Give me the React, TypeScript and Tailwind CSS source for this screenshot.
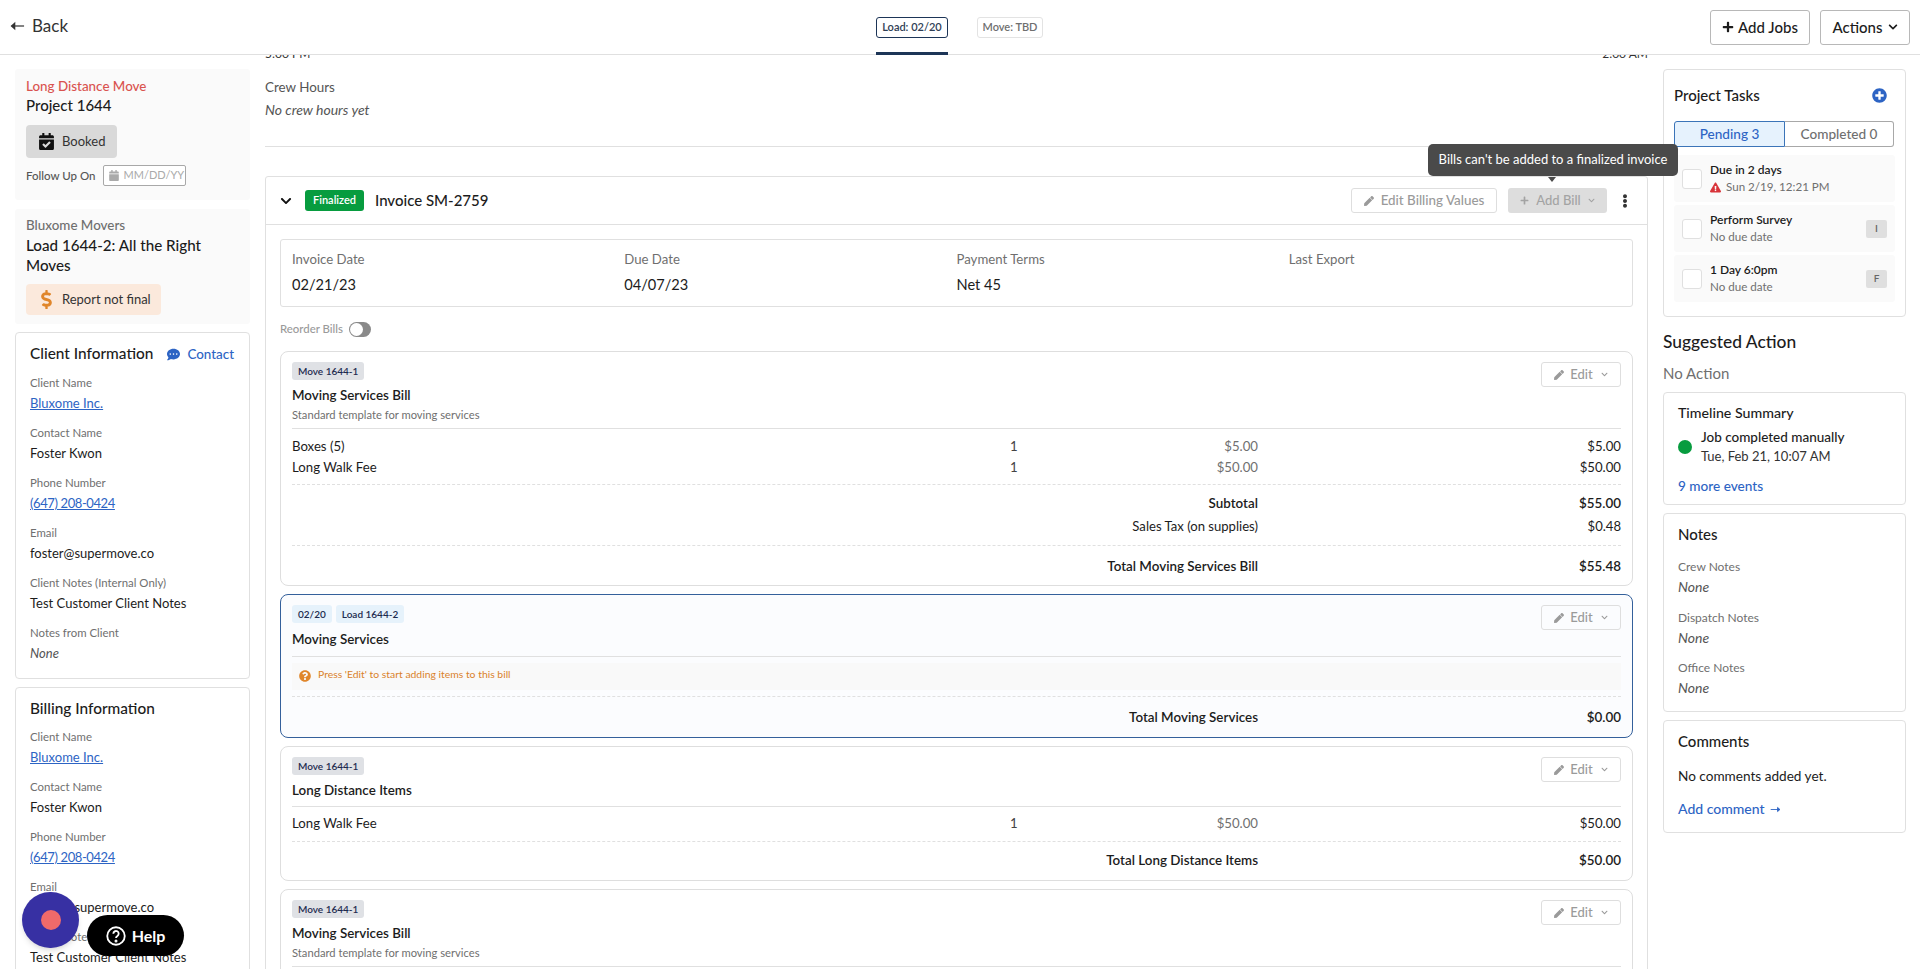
import React from "react";
import {
  FaCalendarCheck, FaCalendar, FaDollarSign, FaPen, FaChevronDown, FaCommentDots, FaPlus,
  FaEllipsisV, FaExclamationTriangle, FaQuestionCircle, FaPlusCircle,
} from "react-icons/fa";

const Arrow = ({ left, className }: { left?: boolean; className?: string }) => (
  <svg viewBox="0 0 16 10" className={className} fill="none" stroke="currentColor" strokeWidth="1.3">
    {left ? (
      <>
        <path d="M15 5H2" />
        <path d="M5 2 1.6 5 5 8z" fill="currentColor" />
      </>
    ) : (
      <>
        <path d="M1 5h13" />
        <path d="M11 2l3.4 3L11 8z" fill="currentColor" />
      </>
    )}
  </svg>
);

const Field = ({ label, value, kind }: { label: string; value: string; kind?: "link" | "phone" | "none" }) => (
  <div className="h-[50px]">
    <div className="h-[16px] text-[11.4px] leading-[16px] text-[#6f6f6f]">{label}</div>
    <div
      className={
        "mt-[2px] h-[20px] text-[13px] leading-[20px] " +
        (kind === "link"
          ? "text-[#2d64c4] underline"
          : kind === "phone"
            ? "text-[#2d64c4] underline tracking-[-0.4px]"
            : kind === "none"
              ? "italic text-[#555555]"
              : "text-[#1c1c1c]")
      }
    >
      {value}
    </div>
  </div>
);

const Chip = ({ children, blue }: { children: React.ReactNode; blue?: boolean }) => (
  <span
    className={
      "flex h-[18px] items-center rounded-[3px] px-[6px] text-[10px] font-semibold text-[#1d2b4f] " +
      (blue ? "bg-[#e6f2fb]" : "bg-[#dfe1e5]")
    }
  >
    {children}
  </span>
);

const EditButton = ({ light }: { light?: boolean }) => (
  <div
    className={
      "flex h-[25px] w-[80px] items-center justify-center gap-[6px] rounded-[3px] border border-[#dedede] text-[13px] font-medium text-[#9a9a9a] " +
      (light ? "bg-[#fbfcfe]" : "bg-white")
    }
  >
    <FaPen className="h-[10px] w-[10px]" />
    <span>Edit</span>
    <FaChevronDown className="ml-[2px] h-[7px] w-[7px]" />
  </div>
);

const Item = ({ name, price, total }: { name: string; price: string; total: string }) => (
  <div className="flex h-[21px] items-center text-[13.2px] text-[#1c1c1c]">
    <div className="w-[718px]">{name}</div>
    <div className="w-[20px] text-[#444444]">1</div>
    <div className="flex-1 text-right text-[#6f6f6f]">{price}</div>
    <div className="w-[363px] text-right">{total}</div>
  </div>
);

const Sum = ({ label, value, bold, className }: { label: string; value: string; bold?: boolean; className?: string }) => (
  <div
    className={
      "flex items-center text-[#1c1c1c] " +
      (bold ? "text-[13.4px] font-semibold " : "text-[13.1px] ") +
      (className ?? "")
    }
  >
    <div className="flex-1 text-right">{label}</div>
    <div className="w-[363px] text-right">{value}</div>
  </div>
);

const BillHead = ({
  chips,
  title,
  desc,
  blue,
  tight,
}: {
  chips: string[];
  title: string;
  desc?: string;
  blue?: boolean;
  tight?: boolean;
}) => (
  <div className={"flex items-start justify-between border-b border-[#e0e0e0] " + (desc ? "pb-[5px]" : tight ? "pb-[6px]" : "pb-[7px]")}>
    <div>
      <div className="flex gap-[4px]">
        {chips.map((c) => (
          <Chip key={c} blue={blue}>
            {c}
          </Chip>
        ))}
      </div>
      <div className={"text-[13.4px] font-semibold leading-[20px] text-[#1c1c1c] " + (desc || tight ? "mt-[5px]" : "mt-[6px]")}>
        {title}
      </div>
      {desc && <div className="mt-[2px] text-[11.2px] leading-[16px] text-[#6f6f6f]">{desc}</div>}
    </div>
    <EditButton light={blue} />
  </div>
);

const Dash = () => <div className="border-b border-dashed border-[#e0e0e0]" />;

const Bill = ({ children, blue }: { children: React.ReactNode; blue?: boolean }) => (
  <div
    className={
      "rounded-[8px] border px-[11px] pt-[10px] " +
      (blue ? "border-[#34609b] bg-[#fbfcfe]" : "border-[#dedede] bg-white")
    }
  >
    {children}
  </div>
);

const SideCard = ({ children, className }: { children: React.ReactNode; className?: string }) => (
  <div className={"shrink-0 rounded-[4px] border border-[#e0e0e0] bg-white " + (className ?? "")}>{children}</div>
);

const Task = ({
  title,
  sub,
  tag,
  warn,
}: {
  title: string;
  sub: string;
  tag?: string;
  warn?: boolean;
}) => (
  <div className="flex h-[47px] items-center rounded-[3px] bg-[#fafafa] pl-[8px] pr-[8px]">
    <div className="h-[20px] w-[20px] rounded-[3px] border border-[#e0e0e0] bg-white" />
    <div className="ml-[8px] flex-1">
      <div className="text-[12px] font-semibold leading-[16px] text-[#1c1c1c]">{title}</div>
      <div className="mt-[1px] flex items-center gap-[5px] text-[11.6px] leading-[16px] text-[#6f6f6f]">
        {warn && <FaExclamationTriangle className="h-[11px] w-[11px] text-[#d8343a]" />}
        <span>{sub}</span>
      </div>
    </div>
    {tag && (
      <div className="flex h-[18px] w-[21px] items-center justify-center rounded-[2px] bg-[#dfdfdf] text-[10px] font-semibold text-[#666666]">
        {tag}
      </div>
    )}
  </div>
);

export default function App() {
  return (
    <div className="relative flex h-[969px] w-[1920px] flex-col overflow-hidden bg-white font-['Lato','Noto_Sans',sans-serif] text-[#1c1c1c]">
      {/* Header */}
      <header className="relative flex h-[55px] shrink-0 items-center justify-between border-b border-[#e0e0e0] bg-white pl-[10px] pr-[10px]">
        <div className="-mt-[2px] flex items-center gap-[7px] text-[17px] text-[#333333]">
          <Arrow left className="h-[10px] w-[15px]" />
          <span>Back</span>
        </div>
        <div className="absolute bottom-[-1px] left-[876px] flex h-[38px] items-start gap-[29px]">
          <div className="flex h-[38px] w-[72px] flex-col">
            <div className="flex h-[21px] items-center justify-center rounded-[3px] border border-[#1d3557] text-[11px] font-semibold text-[#2f3e55]">
              Load: 02/20
            </div>
            <div className="mt-auto h-[3px] bg-[#1d3557]" />
          </div>
          <div className="flex h-[21px] w-[66px] items-center justify-center rounded-[3px] border border-[#e3e3e3] text-[11px] font-semibold text-[#6f6f6f]">
            Move: TBD
          </div>
        </div>
        <div className="flex gap-[10px]">
          <div className="flex h-[35px] w-[100px] items-center justify-center gap-[4px] rounded-[3px] border border-[#b8b8b8] text-[15px] font-medium">
            <FaPlus className="h-[12px] w-[12px]" />
            <span>Add Jobs</span>
          </div>
          <div className="flex h-[35px] w-[90px] items-center justify-center gap-[5px] rounded-[3px] border border-[#b8b8b8] text-[15px] font-medium">
            <span>Actions</span>
            <FaChevronDown className="h-[10px] w-[10px]" />
          </div>
        </div>
      </header>

      <div className="flex min-h-0 flex-1">
        {/* Left */}
        <aside className="flex w-[265px] shrink-0 flex-col overflow-hidden px-[15px] pt-[14px]">
          <div className="h-[131px] shrink-0 rounded-[3px] bg-[#fafafa] px-[11px] pt-[8px]">
            <div className="text-[13.4px] font-medium leading-[18px] text-[#d9534f]">Long Distance Move</div>
            <div className="text-[15px] font-medium leading-[20px]">Project 1644</div>
            <div className="mt-[10px] flex h-[33px] w-[91px] items-center rounded-[4px] bg-[#d9d9d9] pl-[13px]">
              <FaCalendarCheck className="h-[17px] w-[15px] text-[#111111]" />
              <span className="ml-[8px] text-[13px] text-[#333333]">Booked</span>
            </div>
            <div className="mt-[7px] flex items-center">
              <span className="text-[11.5px] font-medium text-[#555555]">Follow Up On</span>
              <div className="ml-[8px] flex h-[21px] w-[83px] items-center gap-[4px] rounded-[2px] border border-[#a8a8a8] bg-white pl-[5px] text-[11px] text-[#aaaaaa]">
                <FaCalendar className="h-[11px] w-[10px]" />
                <span>MM/DD/YY</span>
              </div>
            </div>
          </div>
          <div className="mt-[9px] h-[115px] shrink-0 rounded-[3px] bg-[#fafafa] px-[11px] pt-[8px]">
            <div className="text-[13.4px] font-medium leading-[16px] text-[#6f6f6f]">Bluxome Movers</div>
            <div className="mt-[2px] text-[15.2px] font-medium leading-[20px]">Load 1644-2: All the Right Moves</div>
            <div className="mt-[9px] flex h-[31px] w-[135px] items-center rounded-[4px] bg-[#fbe9dc] pl-[13px]">
              <FaDollarSign className="h-[19px] w-[15px] text-[#e0862b]" />
              <span className="ml-[8px] text-[13px] text-[#333333]">Report not final</span>
            </div>
          </div>
          <SideCard className="mt-[8px] h-[347px] px-[14px] pt-[11px]">
            <div className="mb-[11px] flex h-[20px] items-center justify-between pr-[1px]">
              <span className="text-[15.4px] font-medium">Client Information</span>
              <span className="flex items-center gap-[7px] text-[13.4px] font-medium text-[#2d64c4]">
                <FaCommentDots className="h-[13px] w-[13px]" />
                Contact
              </span>
            </div>
            <Field label="Client Name" value="Bluxome Inc." kind="link" />
            <Field label="Contact Name" value="Foster Kwon" />
            <Field label="Phone Number" value="(647) 208-0424" kind="phone" />
            <Field label="Email" value="foster@supermove.co" />
            <Field label="Client Notes (Internal Only)" value="Test Customer Client Notes" />
            <Field label="Notes from Client" value="None" kind="none" />
          </SideCard>
          <SideCard className="mt-[8px] h-[400px] px-[14px] pt-[11px]">
            <div className="mb-[10px] flex h-[20px] items-center text-[15.4px] font-medium">Billing Information</div>
            <Field label="Client Name" value="Bluxome Inc." kind="link" />
            <Field label="Contact Name" value="Foster Kwon" />
            <Field label="Phone Number" value="(647) 208-0424" kind="phone" />
            <Field label="Email" value="foster@supermove.co" />
            <Field label="Client Notes (Internal Only)" value="Test Customer Client Notes" />
          </SideCard>
        </aside>

        {/* Center */}
        <main className="flex w-[1383px] shrink-0 flex-col">
          <div className="flex h-[3px] shrink-0 items-end justify-between overflow-hidden text-[12px] leading-[9px] text-[#333333]">
            <span>5:00 PM</span>
            <span>2:00 AM</span>
          </div>
          <div className="mt-[19px] shrink-0 text-[13.4px] leading-[20px] text-[#555555]">Crew Hours</div>
          <div className="mt-[3px] shrink-0 text-[14px] italic leading-[20px] text-[#555555]">No crew hours yet</div>
          <div className="mt-[26px] shrink-0 border-b border-[#e0e0e0]" />
          <section className="mt-[29px] shrink-0 rounded-t-[3px] border border-[#e0e0e0]">
            <div className="flex h-[48px] items-center border-b border-[#e0e0e0] pl-[14px] pr-[18px]">
              <FaChevronDown className="h-[12px] w-[12px] text-[#111111]" />
              <span className="ml-[13px] flex h-[21px] w-[59px] items-center justify-center rounded-[3px] bg-[#079c3f] text-[11px] font-semibold text-white">
                Finalized
              </span>
              <span className="ml-[11px] text-[15px] font-medium">Invoice SM-2759</span>
              <div className="ml-auto flex items-center">
                <div className="flex h-[25px] w-[146px] items-center justify-center gap-[7px] rounded-[3px] border border-[#dedede] text-[13.4px] font-medium text-[#9a9a9a]">
                  <FaPen className="h-[10px] w-[10px]" />
                  Edit Billing Values
                </div>
                <div className="relative ml-[11px] flex h-[25px] w-[99px] items-center justify-center gap-[7px] rounded-[3px] bg-[#dddddd] text-[13px] font-medium text-[#a3a3a3]">
                  <FaPlus className="h-[9px] w-[9px]" />
                  Add Bill
                  <FaChevronDown className="h-[7px] w-[7px]" />
                  <div className="absolute bottom-[37px] right-[-71px] z-10 flex h-[32px] w-[250px] items-center justify-center rounded-[5px] bg-[#4a4a4a] text-[13px] font-normal text-white">
                    Bills can't be added to a finalized invoice
                  </div>
                  <div className="absolute left-[40px] top-[-11px] z-10 h-0 w-0 border-x-[4px] border-t-[5px] border-x-transparent border-t-[#4a4a4a]" />
                </div>
                <FaEllipsisV className="ml-[14px] h-[14px] w-[8px] text-[#333333]" />
              </div>
            </div>
            <div className="px-[14px] pt-[14px]">
              <div className="grid h-[68px] grid-cols-4 rounded-[3px] border border-[#e0e0e0] px-[11px] pt-[9px]">
                {[
                  ["Invoice Date", "02/21/23"],
                  ["Due Date", "04/07/23"],
                  ["Payment Terms", "Net 45"],
                  ["Last Export", ""],
                ].map(([l, v]) => (
                  <div key={l}>
                    <div className="text-[13.2px] leading-[20px] text-[#6f6f6f]">{l}</div>
                    <div className="mt-[6px] text-[14.6px] leading-[20px]">{v}</div>
                  </div>
                ))}
              </div>
              <div className="mt-[14px] flex h-[16px] items-center">
                <span className="text-[11.4px] font-medium text-[#9a9a9a]">Reorder Bills</span>
                <div className="ml-[6px] flex h-[15px] w-[22px] items-center rounded-full bg-[#8a8a8a] pl-[1px]">
                  <div className="h-[13px] w-[13px] rounded-full bg-white" />
                </div>
              </div>
              <div className="mt-[14px] flex flex-col gap-[8px]">
                <Bill>
                  <BillHead chips={["Move 1644-1"]} title="Moving Services Bill" desc="Standard template for moving services" />
                  <div className="pb-[6px] pt-[7px]">
                    <Item name="Boxes (5)" price="$5.00" total="$5.00" />
                    <Item name="Long Walk Fee" price="$50.00" total="$50.00" />
                  </div>
                  <Dash />
                  <Sum label="Subtotal" value="$55.00" bold className="mt-[7px] h-[23px]" />
                  <Sum label="Sales Tax (on supplies)" value="$0.48" className="mt-[1px] h-[22px]" />
                  <div className="mt-[7px]">
                    <Dash />
                  </div>
                  <Sum label="Total Moving Services Bill" value="$55.48" bold className="mt-[10px] h-[20px]" />
                  <div className="h-[9px]" />
                </Bill>
                <Bill blue>
                  <BillHead chips={["02/20", "Load 1644-2"]} title="Moving Services" blue />
                  <div className="mt-[6px] flex h-[27px] items-center gap-[7px] bg-[#f9f9f9] pb-[3px] pl-[7px] text-[10.4px] text-[#d9822b]">
                    <FaQuestionCircle className="mt-[2px] h-[12px] w-[12px] text-[#e0862b]" />
                    <span>Press 'Edit' to start adding items to this bill</span>
                  </div>
                  <div className="mt-[6px]">
                    <Dash />
                  </div>
                  <Sum label="Total Moving Services" value="$0.00" bold className="mt-[10px] h-[20px]" />
                  <div className="h-[10px]" />
                </Bill>
                <Bill>
                  <BillHead chips={["Move 1644-1"]} title="Long Distance Items" tight />
                  <div className="pb-[7px] pt-[6px]">
                    <Item name="Long Walk Fee" price="$50.00" total="$50.00" />
                  </div>
                  <Dash />
                  <Sum label="Total Long Distance Items" value="$50.00" bold className="mt-[8px] h-[20px]" />
                  <div className="h-[10px]" />
                </Bill>
                <Bill>
                  <BillHead chips={["Move 1644-1"]} title="Moving Services Bill" desc="Standard template for moving services" />
                  <div className="h-[40px]" />
                </Bill>
              </div>
            </div>
          </section>
        </main>

        {/* Right */}
        <aside className="flex w-[272px] shrink-0 flex-col overflow-hidden pl-[15px] pr-[14px] pt-[14px]">
          <SideCard className="h-[248px] px-[10px] pt-[15px]">
            <div className="flex h-[20px] items-center justify-between pr-[8px]">
              <span className="text-[15px] font-medium">Project Tasks</span>
              <FaPlusCircle className="h-[15px] w-[15px] text-[#2d64c4]" />
            </div>
            <div className="mt-[16px] flex h-[26px] w-[220px] text-[13.6px] font-medium">
              <div className="flex w-[111px] items-center justify-center rounded-l-[3px] border border-[#3b74b8] bg-[#e6f2fd] text-[#2d64c4]">
                Pending 3
              </div>
              <div className="flex flex-1 items-center justify-center rounded-r-[3px] border border-l-0 border-[#a8a8a8] text-[#6f6f6f]">
                Completed 0
              </div>
            </div>
            <div className="mt-[8px] flex flex-col gap-[3px]">
              <Task title="Due in 2 days" sub="Sun 2/19, 12:21 PM" warn />
              <Task title="Perform Survey" sub="No due date" tag="I" />
              <Task title="1 Day 6:0pm" sub="No due date" tag="F" />
            </div>
          </SideCard>
          <div className="mt-[13px] shrink-0 text-[17.4px] font-medium leading-[24px]">Suggested Action</div>
          <div className="mt-[9px] shrink-0 text-[15px] leading-[20px] text-[#6f6f6f]">No Action</div>
          <SideCard className="mt-[9px] h-[113px] px-[14px] pt-[10px]">
            <div className="text-[14.2px] font-medium leading-[20px]">Timeline Summary</div>
            <div className="mt-[5px] flex items-center gap-[9px]">
              <div className="h-[14px] w-[14px] rounded-full bg-[#079c3f]" />
              <div>
                <div className="text-[13.5px] font-medium leading-[18px]">Job completed manually</div>
                <div className="mt-[1px] text-[13px] leading-[18px] text-[#333333]">Tue, Feb 21, 10:07 AM</div>
              </div>
            </div>
            <div className="mt-[12px] text-[13.6px] font-medium leading-[18px] text-[#2d64c4]">9 more events</div>
          </SideCard>
          <SideCard className="mt-[8px] h-[199px] px-[14px] pt-[10px]">
            <div className="text-[15px] font-medium leading-[20px]">Notes</div>
            <div className="mt-[15px] flex flex-col">
              {["Crew Notes", "Dispatch Notes", "Office Notes"].map((n) => (
                <div key={n} className="h-[50.5px]">
                  <div className="text-[12px] leading-[16px] text-[#6f6f6f]">{n}</div>
                  <div className="mt-[2px] text-[14px] italic leading-[20px] text-[#555555]">None</div>
                </div>
              ))}
            </div>
          </SideCard>
          <SideCard className="mt-[8px] h-[113px] px-[14px] pt-[10px]">
            <div className="text-[15px] font-medium leading-[20px]">Comments</div>
            <div className="mt-[15px] text-[13.6px] leading-[20px]">No comments added yet.</div>
            <div className="mt-[13px] flex items-center gap-[5px] text-[14px] font-medium leading-[20px] text-[#2d64c4]">
              Add comment
              <Arrow className="h-[9px] w-[11px]" />
            </div>
          </SideCard>
        </aside>
      </div>

      {/* Floating */}
      <div className="absolute left-[22px] top-[892px] flex h-[56px] w-[57px] items-center justify-center rounded-full bg-[#3730a3] shadow-md">
        <div className="h-[20px] w-[20px] rounded-full bg-[#f06a6a]" />
      </div>
      <div className="absolute left-[87px] top-[915px] flex h-[41px] w-[97px] items-center justify-center gap-[6px] rounded-full bg-black text-[16px] font-bold text-white">
        <svg viewBox="0 0 24 24" className="h-[20px] w-[20px]" fill="none" stroke="currentColor" strokeWidth="2.2">
          <circle cx="12" cy="12" r="10.5" />
          <path d="M8.8 9.2a3.2 3.2 0 1 1 4.9 2.7c-1.1.7-1.7 1.3-1.7 2.6" />
          <circle cx="12" cy="18" r="0.7" fill="currentColor" />
        </svg>
        Help
      </div>
    </div>
  );
}
